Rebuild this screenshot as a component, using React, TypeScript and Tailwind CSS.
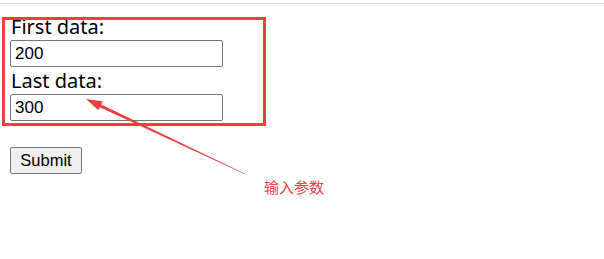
import { useState } from "react";

// Form sits in normal flow; red box, arrow and note are screenshot annotations drawn over it.
export default function App() {
  const [first, setFirst] = useState("200");
  const [last, setLast] = useState("300");

  return (
    <div className="relative w-[604px] h-[259px] bg-white overflow-hidden">
      <div className="h-[4px] border-b border-[#dedede]" />

      <form
        className="flex flex-col items-start pl-[10px] pt-[10px]"
        onSubmit={(e) => e.preventDefault()}
      >
        <label className="h-[26px] leading-[26px] pl-[1px] text-[20px] text-black font-['Noto_Sans',sans-serif]">
          First data:
        </label>
        <input
          value={first}
          onChange={(e) => setFirst(e.target.value)}
          className="w-[213px] h-[27px] px-[4px] border border-[#767676] rounded-[2px] bg-white text-[17px] text-black font-['Liberation_Sans',Arial,sans-serif] outline-none"
        />
        <label className="h-[27px] leading-[27px] pl-[1px] text-[20px] text-black font-['Noto_Sans',sans-serif]">
          Last data:
        </label>
        <input
          value={last}
          onChange={(e) => setLast(e.target.value)}
          className="w-[213px] h-[27px] px-[4px] border border-[#767676] rounded-[2px] bg-white text-[17px] text-black font-['Liberation_Sans',Arial,sans-serif] outline-none"
        />
        <button
          type="submit"
          className="mt-[26px] w-[72px] h-[27px] border border-[#767676] rounded-[2px] bg-[#efefef] text-[16.5px] text-black font-['Liberation_Sans',Arial,sans-serif]"
        >
          Submit
        </button>
      </form>

      {/* annotations */}
      <div className="absolute left-[2px] top-[17px] w-[264px] h-[109px] border-[3px] border-[#f03d3d] pointer-events-none" />
      <svg
        className="absolute inset-0 pointer-events-none"
        width="604"
        height="259"
        viewBox="0 0 604 259"
      >
        <polygon
          points="86,99 102.6,101.3 101.2,104.4 245.1,173.7 244.9,174.3 99.8,107.3 98.4,110.3"
          fill="#f03d3d"
        />
      </svg>
      <span className="absolute left-[264px] top-[178px] text-[15px] leading-[18px] text-[#f04444] font-['Noto_Sans_CJK_SC',sans-serif]">
        输入参数
      </span>
    </div>
  );
}
